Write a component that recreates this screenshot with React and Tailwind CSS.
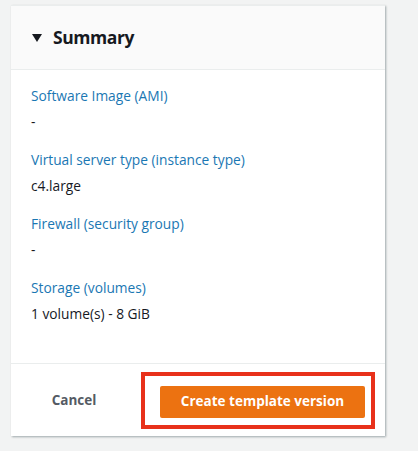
import React from 'react';

const items = [
  { label: 'Software Image (AMI)', value: '-' },
  { label: 'Virtual server type (instance type)', value: 'c4.large' },
  { label: 'Firewall (security group)', value: '-' },
  { label: 'Storage (volumes)', value: '1 volume(s) - 8 GiB' },
];

export default function App() {
  return (
    <div
      className="w-[418px] h-[451px] bg-[#f2f3f3] pt-[5px] pl-[11px] overflow-hidden"
      style={{ fontFamily: '"Open Sans", "Noto Sans", Arial, sans-serif' }}
    >
      <div className="w-[374px] h-[431px] bg-white flex flex-col shadow-[1px_1px_2px_rgba(0,28,36,0.35)] border-t border-[#eaeded]">
        {/* Header */}
        <div className="h-[64px] flex-shrink-0 bg-[#fafafa] border-b border-[#eaeded] flex items-center pl-[21px] gap-[11px]">
          <svg width="10" height="8" viewBox="0 0 10 8"><path d="M0 0h10L5 8z" fill="#16191f" /></svg>
          <span className="text-[17.5px] font-bold text-[#16191f] tracking-tight">Summary</span>
        </div>

        {/* Body */}
        <div className="flex-1 flex flex-col px-[20px] pt-[16px] gap-[18px]">
          {items.map((it) => (
            <div key={it.label} className="flex flex-col gap-[6px]">
              <div className="text-[13.75px] leading-[20px] text-[#1a77b3]">{it.label}</div>
              <div className="text-[13.75px] leading-[20px] text-[#16191f]">{it.value}</div>
            </div>
          ))}
        </div>

        {/* Footer */}
        <div className="h-[73px] flex-shrink-0 border-t border-[#eaeded] flex items-center">
          <span className="w-[126px] mr-[4px] text-center text-[13.5px] font-bold text-[#545b64]">Cancel</span>
          <div className="border-4 border-[#e8311a] pl-[15px] pr-[6px] pt-[10px] pb-[7px]">
            <button className="w-[205px] h-[32px] bg-[#ec7211] rounded-[2px] text-white text-[13.5px] font-bold">
              Create template version
            </button>
          </div>
        </div>
      </div>
    </div>
  );
}
